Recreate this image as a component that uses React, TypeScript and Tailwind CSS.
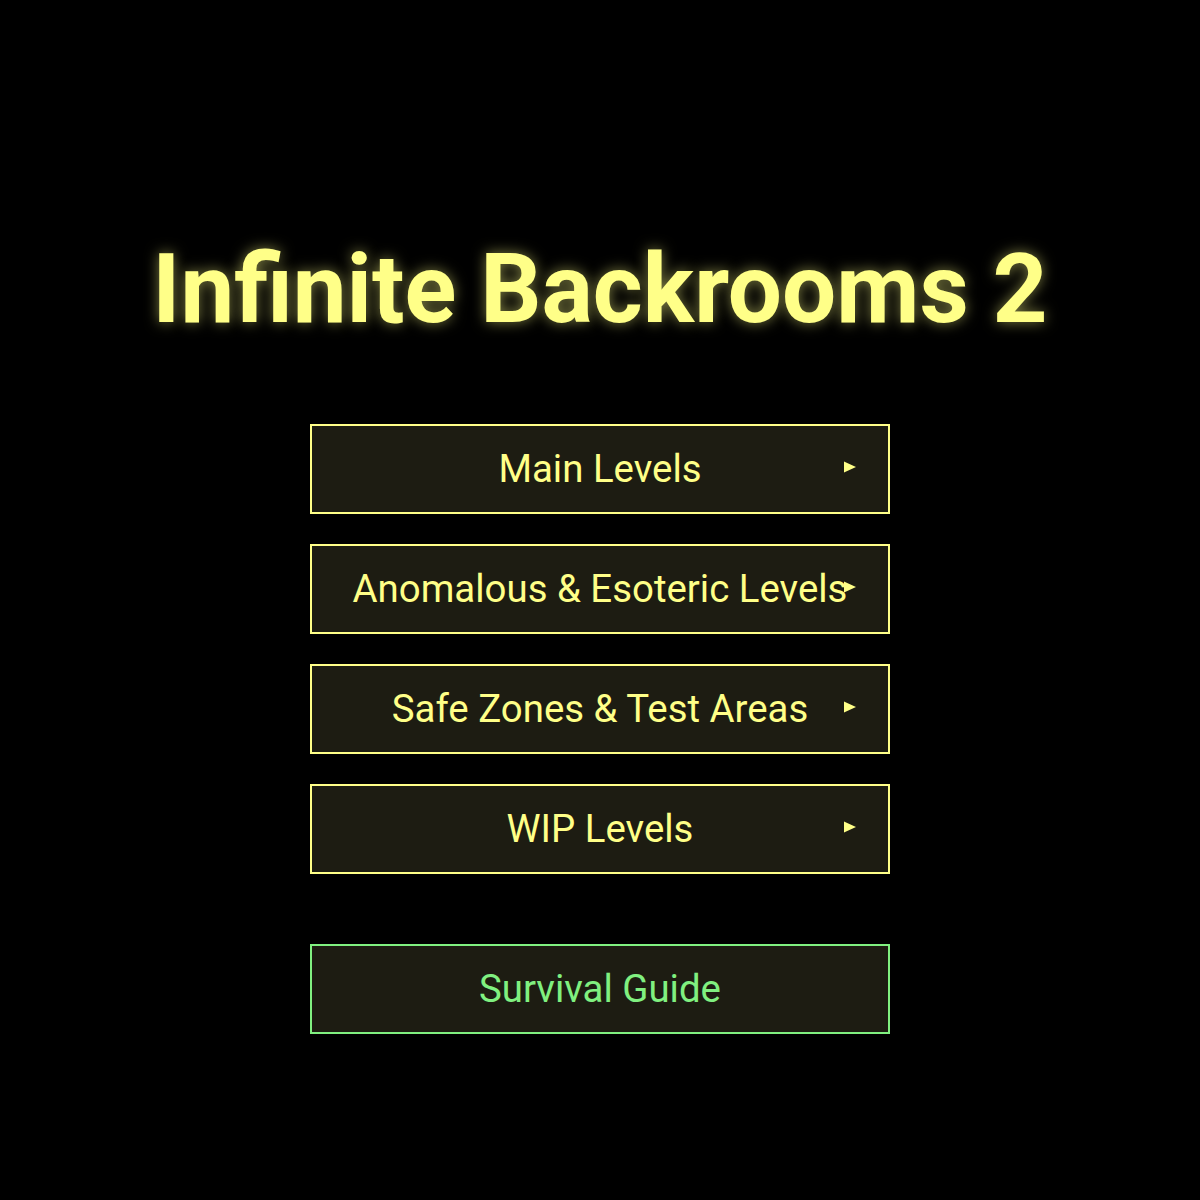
const levels = [
  'Main Levels',
  'Anomalous & Esoteric Levels',
  'Safe Zones & Test Areas',
  'WIP Levels',
]

function MenuButton({ label }: { label: string }) {
  return (
    <button className="relative flex h-[90px] w-[580px] items-center justify-center border-2 border-[#ffff88] bg-[#1d1c12] text-[38.4px] text-[#ffff88]">
      <span>{label}</span>
      {/* little arrow on the right */}
      <span className="absolute right-[32px] top-[calc(50%-2px)] -translate-y-1/2">
        <svg width="12" height="12" viewBox="0 0 12 12">
          <polygon points="0,0.5 12,6 0,11.5" fill="#ffff88" />
        </svg>
      </span>
    </button>
  )
}

export default function App() {
  return (
    <div
      className="flex min-h-[1200px] w-full flex-col items-center bg-black pt-[241px]"
      style={{ fontFamily: 'Roboto, "Liberation Sans", sans-serif' }}
    >
      <h1 className="text-[96px] font-bold leading-none text-[#ffff88] [text-shadow:0_0_14px_rgba(255,255,136,0.5)]">
        Infinite Backrooms 2
      </h1>

      <div className="mt-[87px] flex flex-col gap-[30px]">
        {levels.map((l) => (
          <MenuButton key={l} label={l} />
        ))}
      </div>

      <button className="mt-[70px] flex h-[90px] w-[580px] items-center justify-center border-2 border-[#80f080] bg-[#1d1c12] text-[38.4px] text-[#80f080]">
        Survival Guide
      </button>
    </div>
  )
}
